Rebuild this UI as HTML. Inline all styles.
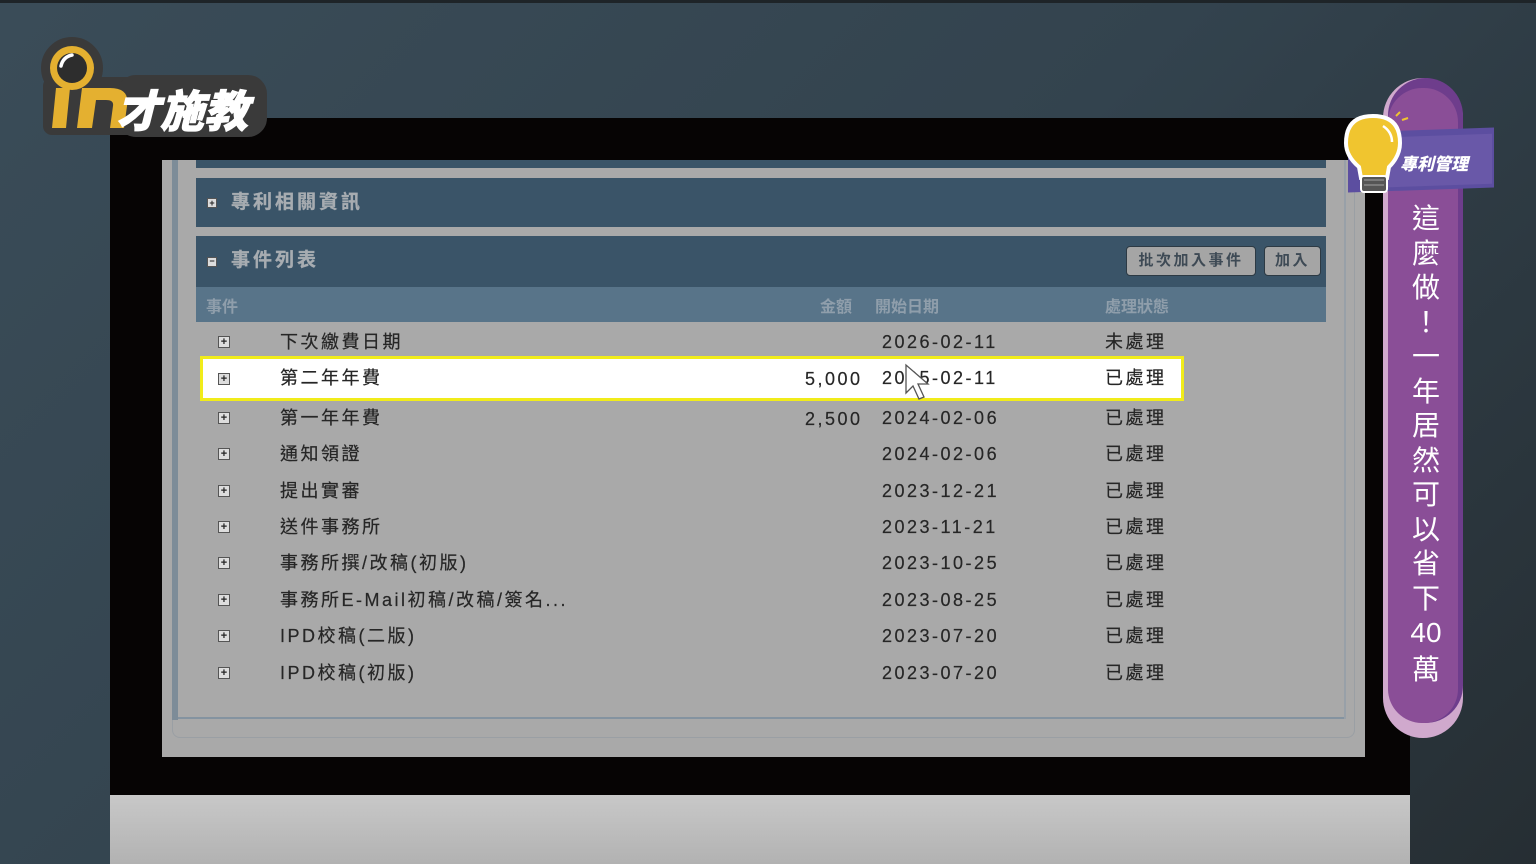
<!DOCTYPE html>
<html><head><meta charset="utf-8"><style>
*{margin:0;padding:0;box-sizing:border-box}
body{width:1536px;height:864px;overflow:hidden;position:relative;background:linear-gradient(135deg,#3a4c58 0%,#33434e 50%,#262e33 100%);font-family:"Liberation Sans","Noto Sans CJK TC",sans-serif}
.a{position:absolute}
.t{position:absolute;font-size:18px;letter-spacing:2.5px;color:#262626;line-height:20px;white-space:nowrap;-webkit-text-stroke:0.2px #262626}
.pl{position:absolute;width:12px;height:12px;border:1px solid #555;background:#ddd;font-size:11px;line-height:10px;text-align:center;color:#222;left:218px;font-weight:bold}
.h{position:absolute;left:231px;font-size:19px;font-weight:bold;letter-spacing:3px;color:#a7acb1;font-family:"Noto Sans CJK TC",sans-serif;-webkit-text-stroke:0.3px #a7acb1}
</style></head><body>
<div class="a" style="left:0;top:0;width:1536px;height:3px;background:#1e2428"></div>
<div class="a" style="left:110px;top:118px;width:1300px;height:680px;background:#060404;border-radius:14px 14px 0 0"></div>
<div class="a" style="left:110px;top:795px;width:1300px;height:69px;background:linear-gradient(#c8c8c8,#b2b2b2)"></div>
<div class="a" style="left:162px;top:160px;width:1203px;height:597px;background:#a9a9a9"></div>
<div class="a" style="left:172px;top:160px;width:1183px;height:578px;border:1px solid #9a9fa4;border-top:none;border-radius:0 0 8px 8px"></div>
<div class="a" style="left:172px;top:160px;width:6px;height:560px;background:#7d8c98"></div>
<div class="a" style="left:178px;top:717px;width:1168px;height:2px;background:#8493a0"></div>
<div class="a" style="left:1344px;top:160px;width:2px;height:559px;background:#98a0a8"></div>
<div class="a" style="left:196px;top:160px;width:1130px;height:8px;background:#3a5468"></div>
<div class="a" style="left:196px;top:178px;width:1130px;height:49px;background:#3a5468"></div>
<div class="pl" style="left:207px;top:198px;width:10px;height:10px;font-size:9px;line-height:8px">+</div>
<div class="h" style="top:187px">專利相關資訊</div>
<div class="a" style="left:196px;top:236px;width:1130px;height:51px;background:#3a5468"></div>
<div class="pl" style="left:207px;top:257px;width:10px;height:10px;font-size:9px;line-height:7px">−</div>
<div class="h" style="top:245px">事件列表</div>
<div class="a" style="left:1126px;top:246px;width:130px;height:30px;background:#a5a5a5;border:1.5px solid #2d3a44;border-radius:4px;font-size:15px;letter-spacing:2.5px;color:#3e4a55;text-align:center;line-height:28px;font-weight:bold">批次加入事件</div>
<div class="a" style="left:1264px;top:246px;width:57px;height:30px;background:#a5a5a5;border:1.5px solid #2d3a44;border-radius:4px;font-size:15px;letter-spacing:2.5px;color:#3e4a55;text-align:center;line-height:28px;font-weight:bold">加入</div>
<div class="a" style="left:196px;top:287px;width:1130px;height:35px;background:#587489"></div>
<div class="a" style="left:206px;top:293px;font-size:16px;color:#8f9eab;font-weight:bold">事件</div>
<div class="a" style="left:820px;top:293px;font-size:16px;color:#8f9eab;font-weight:bold">金額</div>
<div class="a" style="left:875px;top:293px;font-size:16px;color:#8f9eab;font-weight:bold">開始日期</div>
<div class="a" style="left:1105px;top:293px;font-size:16px;color:#8f9eab;font-weight:bold">處理狀態</div>
<div class="a" style="left:200px;top:356px;width:984px;height:45px;background:#fff;border:3px solid #f1ec1a"></div>

<div class="pl" style="top:336px">+</div><div class="t" style="left:280px;top:332px">下次繳費日期</div><div class="t" style="left:882px;top:332px">2026-02-11</div><div class="t" style="left:1105px;top:332px">未處理</div>
<div class="pl" style="top:373px">+</div><div class="t" style="left:280px;top:368px">第二年年費</div><div class="t" style="left:805px;top:369px">5,000</div><div class="t" style="left:882px;top:368px">2025-02-11</div><div class="t" style="left:1105px;top:368px">已處理</div>
<div class="pl" style="top:412px">+</div><div class="t" style="left:280px;top:408px">第一年年費</div><div class="t" style="left:805px;top:409px">2,500</div><div class="t" style="left:882px;top:408px">2024-02-06</div><div class="t" style="left:1105px;top:408px">已處理</div>
<div class="pl" style="top:448px">+</div><div class="t" style="left:280px;top:444px">通知領證</div><div class="t" style="left:882px;top:444px">2024-02-06</div><div class="t" style="left:1105px;top:444px">已處理</div>
<div class="pl" style="top:485px">+</div><div class="t" style="left:280px;top:481px">提出實審</div><div class="t" style="left:882px;top:481px">2023-12-21</div><div class="t" style="left:1105px;top:481px">已處理</div>
<div class="pl" style="top:521px">+</div><div class="t" style="left:280px;top:517px">送件事務所</div><div class="t" style="left:882px;top:517px">2023-11-21</div><div class="t" style="left:1105px;top:517px">已處理</div>
<div class="pl" style="top:557px">+</div><div class="t" style="left:280px;top:553px">事務所撰/改稿(初版)</div><div class="t" style="left:882px;top:553px">2023-10-25</div><div class="t" style="left:1105px;top:553px">已處理</div>
<div class="pl" style="top:594px">+</div><div class="t" style="left:280px;top:590px">事務所E-Mail初稿/改稿/簽名...</div><div class="t" style="left:882px;top:590px">2023-08-25</div><div class="t" style="left:1105px;top:590px">已處理</div>
<div class="pl" style="top:630px">+</div><div class="t" style="left:280px;top:626px">IPD校稿(二版)</div><div class="t" style="left:882px;top:626px">2023-07-20</div><div class="t" style="left:1105px;top:626px">已處理</div>
<div class="pl" style="top:667px">+</div><div class="t" style="left:280px;top:663px">IPD校稿(初版)</div><div class="t" style="left:882px;top:663px">2023-07-20</div><div class="t" style="left:1105px;top:663px">已處理</div>
<svg class="a" style="left:903px;top:363px" width="36" height="42"><path d="M3 2 L3 30 L10 23 L16 36 L21 34 L15 21 L25 21 Z" fill="#fff" stroke="#555" stroke-width="1.3"/></svg>

<svg class="a" style="left:30px;top:28px" width="240" height="112">
<g stroke="#3a3a3a" stroke-width="18" stroke-linejoin="round" fill="#3a3a3a">
<circle cx="42" cy="40" r="22"/>
<rect x="22" y="58" width="96" height="40"/>
<rect x="96" y="56" width="132" height="44" rx="10"/>
</g>
<circle cx="42" cy="40" r="22" fill="#e4b030"/>
<circle cx="42" cy="40" r="15" fill="#2d2d2d"/>
<path d="M31 38 Q33 29 42 27" stroke="#fff" stroke-width="3.5" fill="none" stroke-linecap="round"/>
<path d="M26 60 L40 60 L36 100 L22 100 Z" fill="#e4b030"/>
<path d="M47 100 L52 60 L80 60 Q100 60 97 78 L94 100 L80 100 L83 78 Q84 72 76 72 L66 72 L62 100 Z" fill="#e4b030"/>
<text x="86" y="99" font-family="Noto Sans CJK TC,sans-serif" font-weight="900" font-size="44" fill="#fff" stroke="#fff" stroke-width="1" font-style="italic">才施教</text>
</svg>

<div class="a" style="left:1383px;top:78px;width:80px;height:660px;background:#d0a9cd;border-radius:40px"></div>
<div class="a" style="left:1388px;top:78px;width:75px;height:645px;background:#6e3d8c;border-radius:38px"></div>
<div class="a" style="left:1388px;top:88px;width:70px;height:635px;background:#8a4e97;border-radius:34px"></div>
<div class="a" style="left:1348px;top:130px;width:146px;height:60px;background:#5c4ea0;transform:skewY(-2deg)"></div>
<div class="a" style="left:1360px;top:136px;width:132px;height:50px;background:#6958a8;transform:skewY(-2deg)"></div>
<div class="a" style="left:1400px;top:150px;font-size:17px;font-weight:900;font-style:italic;color:#fff;font-family:'Noto Sans CJK TC',sans-serif">專利管理</div>
<svg class="a" style="left:1340px;top:110px" width="70" height="86">
<path d="M33 6 Q60 6 60 33 Q60 46 49 57 L47 68 L21 68 L19 57 Q6 46 6 33 Q6 6 33 6 Z" fill="#f0c52f" stroke="#fff" stroke-width="4"/>
<rect x="21" y="66" width="26" height="16" rx="3" fill="#555" stroke="#fff" stroke-width="2"/>
<path d="M24 70 h20 M24 75 h20" stroke="#888" stroke-width="1.5"/>
<path d="M43 16 Q52 22 52 32" stroke="#fff" stroke-width="2.5" fill="none"/>
<path d="M56 6 l4 -4 M62 10 l6 -2" stroke="#f0c52f" stroke-width="2"/>
</svg>
<div class="a" style="left:1404px;top:200px;width:44px;font-size:28px;line-height:34.5px;color:#fff;text-align:center;font-family:'Noto Sans CJK TC',sans-serif">這<br>麼<br>做<br>！<br>一<br>年<br>居<br>然<br>可<br>以<br>省<br>下<br><span style="font-family:'Liberation Sans'">40</span><br>萬</div>
</body></html>
